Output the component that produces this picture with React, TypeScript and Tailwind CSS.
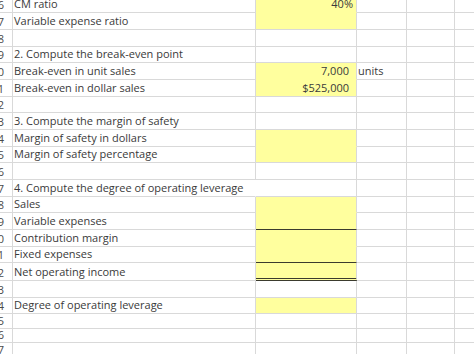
type Row = {
  n: number;
  h: string;
  label?: string;
  value?: string;
  valuePad?: string;
  unit?: string;
  yellow?: boolean;
  yellowBelow?: boolean;
  line?: 'single' | 'double';
  overflow?: boolean;
};

const rows: Row[] = [
  { n: 6, h: 'h-[18px]', label: 'CM ratio', value: '40%', valuePad: 'pr-[3px]', yellow: true, yellowBelow: true },
  { n: 7, h: 'h-[17px]', label: 'Variable expense ratio', yellow: true },
  { n: 8, h: 'h-[17px]' },
  { n: 9, h: 'h-[16px]', label: '2. Compute the break-even point' },
  { n: 10, h: 'h-[17px]', label: 'Break-even in unit sales', value: '7,000', valuePad: 'pr-[7px]', unit: 'units', yellow: true, yellowBelow: true },
  { n: 11, h: 'h-[17px]', label: 'Break-even in dollar sales', value: '$525,000', valuePad: 'pr-[7px]', yellow: true },
  { n: 12, h: 'h-[16px]' },
  { n: 13, h: 'h-[17px]', label: '3. Compute the margin of safety' },
  { n: 14, h: 'h-[17px]', label: 'Margin of safety in dollars', yellow: true, yellowBelow: true },
  { n: 15, h: 'h-[16px]', label: 'Margin of safety percentage', yellow: true },
  { n: 16, h: 'h-[17px]' },
  { n: 17, h: 'h-[17px]', label: '4. Compute the degree of operating leverage', overflow: true },
  { n: 18, h: 'h-[16px]', label: 'Sales', yellow: true, yellowBelow: true },
  { n: 19, h: 'h-[17px]', label: 'Variable expenses', yellow: true, line: 'single' },
  { n: 20, h: 'h-[17px]', label: 'Contribution margin', yellow: true, yellowBelow: true },
  { n: 21, h: 'h-[16px]', label: 'Fixed expenses', yellow: true, line: 'single' },
  { n: 22, h: 'h-[18px]', label: 'Net operating income', yellow: true, line: 'double' },
  { n: 23, h: 'h-[17px]' },
  { n: 24, h: 'h-[16px]', label: 'Degree of operating leverage', yellow: true },
  { n: 25, h: 'h-[15px]' },
  { n: 26, h: 'h-[14px]' },
  { n: 27, h: 'h-[15px]' },
];

function SheetRow({ r }: { r: Row }) {
  let cBottom = 'border-b border-b-[#d9d9d9]';
  if (r.line === 'single') cBottom = 'border-b border-b-[#3b3b2e]';
  if (r.line === 'double') cBottom = 'border-b-[3px] border-double border-b-[#3b3b2e]';
  if (r.yellowBelow) cBottom = 'border-b border-b-[#ffff9e]';

  return (
    <div className={`flex ${r.h} shrink-0`}>
      <div className="w-[13px] shrink-0 overflow-hidden border-r border-b border-[#d9d9d9] flex items-end justify-end pr-[8px] pb-[1px] text-[#4a4a4a] leading-[12px]">
        <span>{r.n}</span>
      </div>
      <div
        className={`w-[243px] shrink-0 border-b border-[#d9d9d9] flex items-end pl-[1px] pb-[1px] leading-[14px] whitespace-nowrap relative z-10 ${
          r.overflow ? 'border-r border-r-transparent' : 'border-r'
        }`}
      >
        {r.label}
      </div>
      <div
        className={`w-[101px] shrink-0 border-r border-r-[#d9d9d9] flex items-end justify-end pb-[1px] leading-[14px] ${
          r.yellow ? `bg-[#ffff9e] ${cBottom}` : 'border-b border-b-[#d9d9d9]'
        } ${r.valuePad ?? ''}`}
      >
        {r.value}
      </div>
      <div className="w-[50px] shrink-0 border-r border-b border-[#d9d9d9] flex items-end pl-[1px] pb-[1px] leading-[14px]">
        {r.unit}
      </div>
      <div className="w-[48px] shrink-0 border-r border-b border-[#d9d9d9]" />
      <div className="flex-1 border-b border-[#d9d9d9]" />
    </div>
  );
}

export default function App() {
  return (
    <main className="w-[474px] h-[354px] overflow-hidden bg-white">
      <div
        className="mt-[-5px] flex flex-col text-[11px] text-[#3a3a3a]"
        style={{ fontFamily: '"Open Sans", Lato, sans-serif' }}
      >
        {rows.map((r) => (
          <SheetRow key={r.n} r={r} />
        ))}
      </div>
    </main>
  );
}
